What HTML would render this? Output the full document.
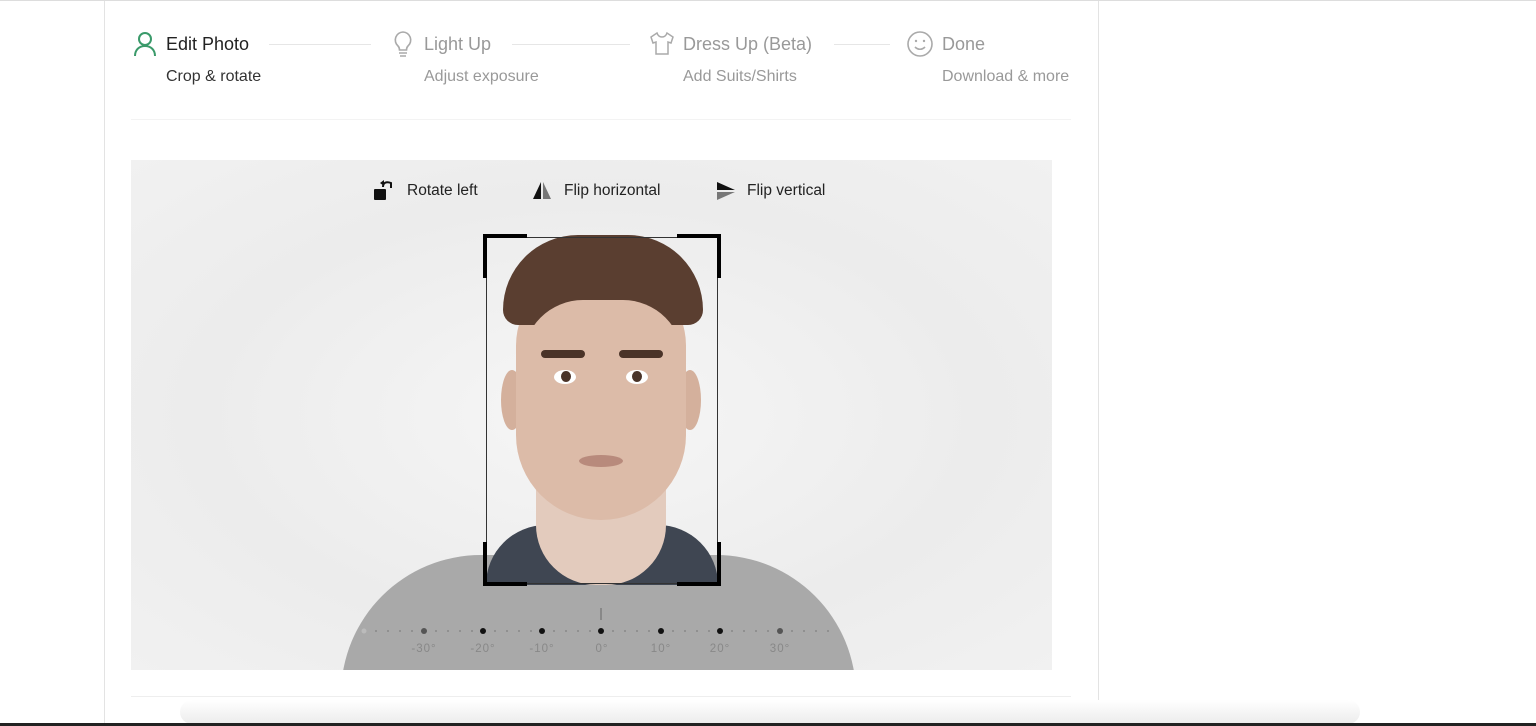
<!DOCTYPE html>
<html><head><meta charset="utf-8"><style>
*{margin:0;padding:0;box-sizing:border-box}
body{width:1536px;height:726px;overflow:hidden;background:#fff;font-family:"Liberation Sans",sans-serif;position:relative}
.abs{position:absolute}
.t{font-size:18px;color:#999}
.s{font-size:16px;color:#999}
.ln{position:absolute;height:1px;background:#e6e6e6;top:44px}
.tb{font-size:15.5px;color:#222}
</style></head><body>
<div class="abs" style="left:104px;top:0;width:1px;height:726px;background:#e3e3e3"></div>
<div class="abs" style="left:1098px;top:0;width:1px;height:726px;background:#e3e3e3"></div>
<div class="abs" style="left:0;top:0;width:1536px;height:1px;background:#ddd"></div>

<svg class="abs" style="left:133px;top:31px" width="24" height="26" viewBox="0 0 24 26"><circle cx="12" cy="8" r="6" fill="none" stroke="#3a9a6a" stroke-width="2"/><path d="M2 25c0-6 4-10 10-10s10 4 10 10" fill="none" stroke="#3a9a6a" stroke-width="2"/></svg>
<div class="abs t" style="left:166px;top:34px;color:#222">Edit Photo</div>
<div class="abs s" style="left:166px;top:68px;color:#333">Crop &amp; rotate</div>
<div class="ln" style="left:269px;width:102px"></div>
<svg class="abs" style="left:392px;top:30px" width="22" height="28" viewBox="0 0 22 28"><path d="M11 2a8 8 0 0 0-5 14c1 1 1.5 2 1.5 4h7c0-2 .5-3 1.5-4A8 8 0 0 0 11 2z" fill="none" stroke="#aaa" stroke-width="1.6"/><path d="M7 23h8M8 26h6" stroke="#aaa" stroke-width="1.6"/></svg>
<div class="abs t" style="left:424px;top:34px">Light Up</div>
<div class="abs s" style="left:424px;top:68px">Adjust exposure</div>
<div class="ln" style="left:512px;width:118px"></div>
<svg class="abs" style="left:649px;top:31px" width="26" height="24" viewBox="0 0 26 24"><path d="M8 2l-6 4 2 6 3-1v12h12V11l3 1 2-6-6-4c-1 3-3 4-5 4s-4-1-5-4z" fill="none" stroke="#aaa" stroke-width="1.5"/></svg>
<div class="abs t" style="left:683px;top:34px">Dress Up (Beta)</div>
<div class="abs s" style="left:683px;top:68px">Add Suits/Shirts</div>
<div class="ln" style="left:834px;width:56px"></div>
<svg class="abs" style="left:906px;top:30px" width="28" height="28" viewBox="0 0 28 28"><circle cx="14" cy="14" r="12" fill="none" stroke="#aaa" stroke-width="1.6"/><circle cx="10" cy="11" r="1.2" fill="#aaa"/><circle cx="18" cy="11" r="1.2" fill="#aaa"/><path d="M9 17c3 3 7 3 10 0" fill="none" stroke="#aaa" stroke-width="1.6"/></svg>
<div class="abs t" style="left:942px;top:34px">Done</div>
<div class="abs s" style="left:942px;top:68px">Download &amp; more</div>
<div class="abs" style="left:131px;top:119px;width:940px;height:1px;background:#f3f3f3"></div>

<div class="abs" style="left:131px;top:160px;width:921px;height:510px;background:radial-gradient(ellipse at 50% 50%,#f6f6f6 0%,#ececec 60%,#f1f1f1 100%);overflow:hidden">
 <div class="abs" style="left:210px;top:395px;width:515px;height:200px;background:#a9a9a9;border-radius:140px 140px 0 0"></div>
 <div class="abs" style="left:355px;top:365px;width:232px;height:60px;background:#3f4652;border-radius:60px 60px 0 0"></div>
 <div class="abs" style="left:405px;top:320px;width:130px;height:105px;background:#e3cbbd;border-radius:0 0 60px 60px"></div>
 <div class="abs" style="left:370px;top:210px;width:22px;height:60px;background:#d4b09c;border-radius:50%"></div>
 <div class="abs" style="left:548px;top:210px;width:22px;height:60px;background:#d4b09c;border-radius:50%"></div>
 <div class="abs" style="left:385px;top:110px;width:170px;height:250px;background:#dcbba8;border-radius:80px 80px 90px 90px"></div>
 <div class="abs" style="left:372px;top:75px;width:200px;height:90px;background:#5a3e30;border-radius:100px 100px 20px 20px"></div>
 <div class="abs" style="left:392px;top:140px;width:160px;height:60px;background:#dcbba8;border-radius:80px 80px 0 0"></div>
 <div class="abs" style="left:410px;top:190px;width:44px;height:8px;background:#4a3328;border-radius:4px"></div>
 <div class="abs" style="left:488px;top:190px;width:44px;height:8px;background:#4a3328;border-radius:4px"></div>
 <div class="abs" style="left:423px;top:210px;width:22px;height:14px;background:#fff;border-radius:50%"></div>
 <div class="abs" style="left:495px;top:210px;width:22px;height:14px;background:#fff;border-radius:50%"></div>
 <div class="abs" style="left:430px;top:211px;width:10px;height:11px;background:#4a3328;border-radius:50%"></div>
 <div class="abs" style="left:501px;top:211px;width:10px;height:11px;background:#4a3328;border-radius:50%"></div>
 <div class="abs" style="left:448px;top:295px;width:44px;height:12px;background:#b88a7c;border-radius:50%"></div>
 <div class="abs" style="left:355px;top:77px;width:232px;height:347px;border:1px solid #333"></div>
 <div class="abs" style="left:352px;top:74px;width:44px;height:44px;border-left:4px solid #000;border-top:4px solid #000"></div>
 <div class="abs" style="left:546px;top:74px;width:44px;height:44px;border-right:4px solid #000;border-top:4px solid #000"></div>
 <div class="abs" style="left:352px;top:382px;width:44px;height:44px;border-left:4px solid #000;border-bottom:4px solid #000"></div>
 <div class="abs" style="left:546px;top:382px;width:44px;height:44px;border-right:4px solid #000;border-bottom:4px solid #000"></div>
</div>
<svg class="abs" style="left:340px;top:600px" width="520" height="60">
 <line x1="261" y1="8" x2="261" y2="20" stroke="#666"/>
 <text font-family="Liberation Sans" font-size="11.5" fill="#888" text-anchor="middle" y="52" letter-spacing="1"><tspan x="84">-30°</tspan><tspan x="143">-20°</tspan><tspan x="202">-10°</tspan><tspan x="262">0°</tspan><tspan x="321">10°</tspan><tspan x="380">20°</tspan><tspan x="440">30°</tspan></text>
 <g fill="#888"><circle cx="24" cy="31" r="2.5" fill="#bbb"/><circle cx="36" cy="31" r="1"/><circle cx="48" cy="31" r="1"/><circle cx="60" cy="31" r="1"/><circle cx="72" cy="31" r="1"/>
 <circle cx="84" cy="31" r="3" fill="#555"/><circle cx="96" cy="31" r="1"/><circle cx="108" cy="31" r="1"/><circle cx="120" cy="31" r="1"/><circle cx="132" cy="31" r="1"/>
 <circle cx="143" cy="31" r="3" fill="#111"/><circle cx="155" cy="31" r="1"/><circle cx="167" cy="31" r="1"/><circle cx="179" cy="31" r="1"/><circle cx="191" cy="31" r="1"/>
 <circle cx="202" cy="31" r="3" fill="#111"/><circle cx="214" cy="31" r="1"/><circle cx="226" cy="31" r="1"/><circle cx="238" cy="31" r="1"/><circle cx="250" cy="31" r="1"/>
 <circle cx="261" cy="31" r="3" fill="#111"/><circle cx="273" cy="31" r="1"/><circle cx="285" cy="31" r="1"/><circle cx="297" cy="31" r="1"/><circle cx="309" cy="31" r="1"/>
 <circle cx="321" cy="31" r="3" fill="#111"/><circle cx="333" cy="31" r="1"/><circle cx="345" cy="31" r="1"/><circle cx="357" cy="31" r="1"/><circle cx="369" cy="31" r="1"/>
 <circle cx="380" cy="31" r="3" fill="#111"/><circle cx="392" cy="31" r="1"/><circle cx="404" cy="31" r="1"/><circle cx="416" cy="31" r="1"/><circle cx="428" cy="31" r="1"/>
 <circle cx="440" cy="31" r="3" fill="#555"/><circle cx="452" cy="31" r="1"/><circle cx="464" cy="31" r="1"/><circle cx="476" cy="31" r="1"/><circle cx="488" cy="31" r="1"/></g>
</svg>

<svg class="abs" style="left:373px;top:179px" width="24" height="24" viewBox="0 0 24 24"><rect x="1" y="10" width="12" height="11" rx="1" fill="#111"/><path d="M10 8c0-4 3-6 8-4l0 5" fill="none" stroke="#111" stroke-width="2"/><path d="M7 4l4-3 0 6z" fill="#111"/></svg>
<div class="abs tb" style="left:407px;top:182px">Rotate left</div>
<svg class="abs" style="left:532px;top:181px" width="20" height="20" viewBox="0 0 20 20"><path d="M9 1L1 18h8z" fill="#111"/><path d="M11 1l8 17h-8z" fill="#777"/></svg>
<div class="abs tb" style="left:564px;top:182px">Flip horizontal</div>
<svg class="abs" style="left:716px;top:181px" width="22" height="20" viewBox="0 0 22 20"><path d="M1 1l18 8H1z" fill="#111"/><path d="M1 11h18L1 19z" fill="#777"/></svg>
<div class="abs tb" style="left:747px;top:182px">Flip vertical</div>

<div class="abs" style="left:131px;top:696px;width:940px;height:1px;background:#eee"></div>
<div class="abs" style="left:180px;top:700px;width:1180px;height:24px;background:linear-gradient(#fff,#ececec);border-radius:12px"></div>
<div class="abs" style="left:0;top:723px;width:1536px;height:3px;background:#222"></div>
</body></html>
